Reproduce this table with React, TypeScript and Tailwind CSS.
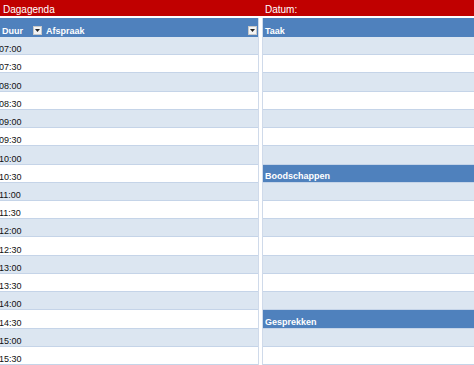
import { Fragment } from "react";

const times = [
    "07:00", "07:30", "08:00", "08:30", "09:00", "09:30",
    "10:00", "10:30", "11:00", "11:30", "12:00", "12:30",
    "13:00", "13:30", "14:00", "14:30", "15:00", "15:30",
];

// rows in the task column that act as section headers
const sections: Record<number, string> = {
    7: "Boodschappen",
    15: "Gesprekken",
};

function FilterButton() {
    return (
        <span className="mb-[2px] flex h-[9px] w-[9px] shrink-0 items-center justify-center border border-[#c8c8c8] bg-[#f4f4f4]">
            <svg width="5" height="3" viewBox="0 0 5 3">
                <path d="M0 0h5L2.5 3z" fill="#222" />
            </svg>
        </span>
    );
}

export default function App() {
    return (
        <div className="h-[365px] w-[474px] overflow-hidden bg-white font-['Liberation_Sans',Arial,sans-serif]">
            {/* title bar */}
            <div className="flex h-[16px] items-end bg-[#c00000] text-[10px] leading-[12px] text-white">
                <div className="w-[263px] pl-[3px]">Dagagenda</div>
                <div className="pl-[2px]">Datum:</div>
            </div>

            <div className="mt-[2px] flex">
                {/* agenda table */}
                <div className="w-[258px] shrink-0">
                    <div className="flex h-[19px] items-end bg-[#4f81bd] text-[9px] font-bold leading-[10px] text-white">
                        <div className="flex w-[44px] items-end justify-between pl-[2px] pr-[2px]">
                            <span className="pb-px">Duur</span>
                            <FilterButton />
                        </div>
                        <div className="flex flex-1 items-end justify-between pl-[2px] pr-[1px]">
                            <span className="pb-px">Afspraak</span>
                            <FilterButton />
                        </div>
                    </div>
                    <div className="grid h-[328px] grid-rows-[repeat(18,minmax(0,1fr))]">
                        {times.map((t, i) => (
                            <div
                                key={t}
                                className={`flex items-end border-b border-[#c5d4e8] text-[9px] leading-[10px] text-[#111] ${
                                    i % 2 === 0 ? "bg-[#dce6f1]" : "bg-white"
                                }`}
                            >
                                <span className="-ml-px">{t}</span>
                            </div>
                        ))}
                    </div>
                </div>

                {/* divider */}
                <div className="w-[5px] shrink-0 border-x border-[#cfdaea] bg-white" />

                {/* task column */}
                <div className="flex-1">
                    <div className="flex h-[19px] items-end bg-[#4f81bd] pl-[2px] text-[9px] font-bold leading-[10px] text-white">
                        <span className="pb-px">Taak</span>
                    </div>
                    <div className="grid h-[328px] grid-rows-[repeat(18,minmax(0,1fr))]">
                        {times.map((t, i) => (
                            <Fragment key={t}>
                                {sections[i] ? (
                                    <div className="flex items-end border-b border-[#c5d4e8] bg-[#4f81bd] pl-[2px] text-[9px] font-bold leading-[10px] text-white">
                                        <span className="pb-px">{sections[i]}</span>
                                    </div>
                                ) : (
                                    <div
                                        className={`border-b border-[#c5d4e8] ${
                                            i % 2 === 0 ? "bg-[#dce6f1]" : "bg-white"
                                        }`}
                                    />
                                )}
                            </Fragment>
                        ))}
                    </div>
                </div>
            </div>
        </div>
    );
}
